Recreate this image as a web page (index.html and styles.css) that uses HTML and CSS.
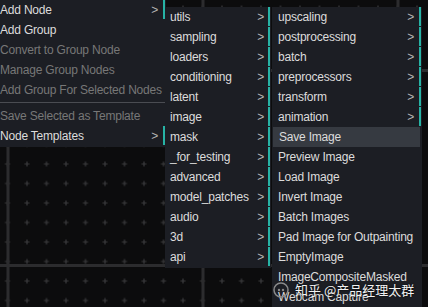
FILE: index.html
```html
<!DOCTYPE html>
<html>
<head>
    <title>Node Menu</title>
    <link rel="stylesheet" href="styles.css">
</head>
<body>
    <svg class="canvas" width="428" height="307">
        <defs>
            <pattern id="dots" x="7.5" y="8" width="19.5" height="19.5" patternUnits="userSpaceOnUse">
                <path d="M0 -2.5V2.5M-2.5 0H2.5" stroke="#3a3a3c" stroke-width="1.2"/>
                <path d="M19.5 -2.5V2.5M17 0H22M0 17V22M-2.5 19.5H2.5M19.5 17V22M17 19.5H22" stroke="#3a3a3c" stroke-width="1.2"/>
            </pattern>
            <pattern id="grid" x="6.5" y="69" width="195" height="195" patternUnits="userSpaceOnUse">
                <rect x="0" y="0" width="3" height="195" fill="#2c2c2e"/>
                <rect x="0" y="0" width="195" height="3" fill="#2c2c2e"/>
            </pattern>
        </defs>
        <rect width="428" height="307" fill="#0c0c0d"/>
        <rect width="428" height="307" fill="url(#dots)"/>
        <rect width="428" height="307" fill="url(#grid)"/>
    </svg>

    <div class="menu menu-main">
        <div class="entry submenu">Add Node <span class="arrow">&gt;</span></div>
        <div class="entry">Add Group</div>
        <div class="entry disabled">Convert to Group Node</div>
        <div class="entry disabled">Manage Group Nodes</div>
        <div class="entry disabled">Add Group For Selected Nodes</div>
        <div class="separator"></div>
        <div class="entry disabled">Save Selected as Template</div>
        <div class="entry submenu">Node Templates <span class="arrow">&gt;</span></div>
    </div>

    <div class="menu menu-cat">
        <div class="entry submenu">utils <span class="arrow">&gt;</span></div>
        <div class="entry submenu">sampling <span class="arrow">&gt;</span></div>
        <div class="entry submenu">loaders <span class="arrow">&gt;</span></div>
        <div class="entry submenu">conditioning <span class="arrow">&gt;</span></div>
        <div class="entry submenu">latent <span class="arrow">&gt;</span></div>
        <div class="entry submenu">image <span class="arrow">&gt;</span></div>
        <div class="entry submenu">mask <span class="arrow">&gt;</span></div>
        <div class="entry submenu">_for_testing <span class="arrow">&gt;</span></div>
        <div class="entry submenu">advanced <span class="arrow">&gt;</span></div>
        <div class="entry submenu">model_patches <span class="arrow">&gt;</span></div>
        <div class="entry submenu">audio <span class="arrow">&gt;</span></div>
        <div class="entry submenu">3d <span class="arrow">&gt;</span></div>
        <div class="entry submenu">api <span class="arrow">&gt;</span></div>
    </div>

    <div class="menu menu-node">
        <div class="entry submenu">upscaling <span class="arrow">&gt;</span></div>
        <div class="entry submenu">postprocessing <span class="arrow">&gt;</span></div>
        <div class="entry submenu">batch <span class="arrow">&gt;</span></div>
        <div class="entry submenu">preprocessors <span class="arrow">&gt;</span></div>
        <div class="entry submenu">transform <span class="arrow">&gt;</span></div>
        <div class="entry submenu">animation <span class="arrow">&gt;</span></div>
        <div class="entry active">Save Image</div>
        <div class="entry">Preview Image</div>
        <div class="entry">Load Image</div>
        <div class="entry">Invert Image</div>
        <div class="entry">Batch Images</div>
        <div class="entry">Pad Image for Outpainting</div>
        <div class="entry">EmptyImage</div>
        <div class="entry">ImageCompositeMasked</div>
        <div class="entry">Webcam Capture</div>
    </div>

    <div class="watermark">
        <svg width="16" height="16" viewBox="0 0 16 16">
            <circle cx="8" cy="8" r="7" fill="none" stroke="#8a8a8a" stroke-width="1.5"/>
            <circle cx="6" cy="8" r="1.2" fill="#8a8a8a"/>
            <circle cx="10" cy="8" r="1.2" fill="#8a8a8a"/>
        </svg>
        <span>知乎 @产品经理太群</span>
    </div>
</body>
</html>
```

FILE: styles.css
```css
body {
    margin: 0;
    width: 428px;
    height: 307px;
    overflow: hidden;
    background: #0c0c0d;
    font-family: "Liberation Sans", Arial, sans-serif;
    font-size: 12px;
    letter-spacing: -0.2px;
}
.canvas {
    position: absolute;
    left: 0;
    top: 0;
}
.menu {
    position: absolute;
    background: #1c1e24;
    color: #dcdcdc;
}
.menu-main {
    left: 0;
    top: 0;
    width: 166px;
    padding-bottom: 1px;
}
.menu-cat {
    left: 165px;
    top: 7px;
    width: 106px;
    padding-bottom: 1px;
}
.menu-node {
    left: 272px;
    top: 7px;
    width: 150px;
    height: 310px;
}
.entry {
    position: relative;
    height: 20px;
    line-height: 20px;
    display: flex;
    justify-content: space-between;
    white-space: nowrap;
}
.menu-main .entry { padding: 0 8px 0 0; }
.menu-cat .entry { padding: 0 7px 0 5px; }
.menu-node .entry { padding: 0 8px 0 6px; }
.entry.submenu::after {
    content: "";
    position: absolute;
    right: 1px;
    top: 0;
    bottom: 1px;
    width: 2px;
    background: #27b3a5;
}
.arrow {
    color: #b5b5b5;
}
.disabled {
    color: #777;
}
.active {
    background: #363a41;
    margin-left: 1px;
    margin-right: 2px;
}
.separator {
    height: 1px;
    margin: 2px 0 3px;
    background: #4a4c52;
}
.watermark {
    position: absolute;
    left: 273px;
    top: 280px;
    display: flex;
    align-items: center;
    gap: 6px;
    color: #f2f2f2;
    font-family: "Noto Sans CJK SC", sans-serif;
    font-size: 13px;
    letter-spacing: 0;
    text-shadow: 0 0 2px #000;
}
```
